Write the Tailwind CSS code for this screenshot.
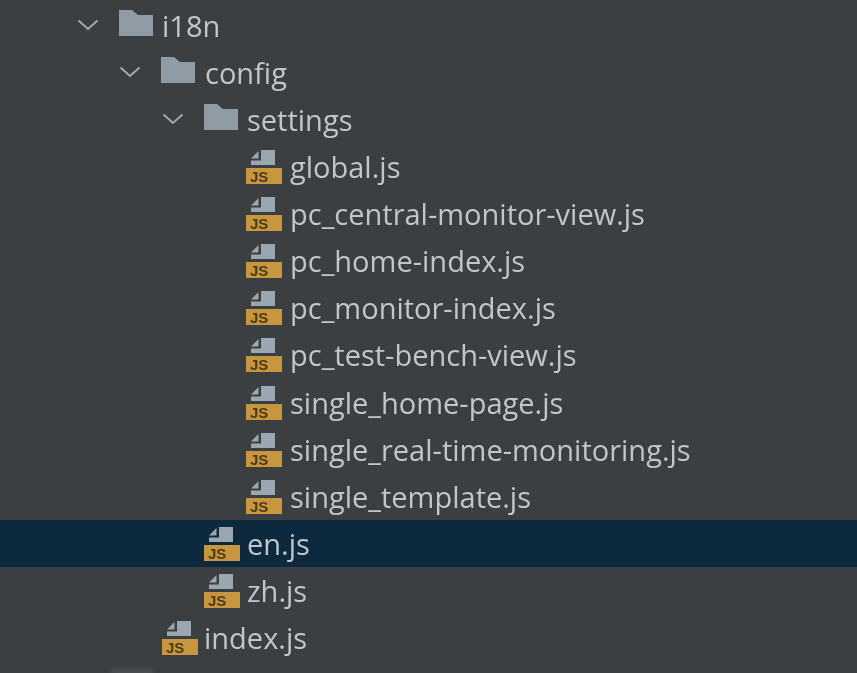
<!DOCTYPE html>
<html><head><meta charset="utf-8"><script src="https://cdn.jsdelivr.net/npm/@tailwindcss/browser@4"></script></head>
<body class="m-0 bg-[#3c3f41]">
<div class="relative w-[857px] h-[673px] overflow-hidden bg-[#3c3f41] pt-[1.5px] font-['Open_Sans','Noto_Sans',sans-serif] text-[29px] text-[#c0c6cc]">
<div class="flex flex-col blur-[0.6px]">
<div class="flex items-center h-[47.14px] pl-[77px]">
  <svg class="w-[22px] h-[12px] mr-[20px]" viewBox="0 0 22 12"><path d="M1.5 1.5 L11 10 L20.5 1.5" fill="none" stroke="#a4a9ad" stroke-width="2"/></svg>
  <svg class="w-[35px] h-[28px] mr-[8px] overflow-visible" viewBox="0 0 35 28"><path d="M0 -1H13L19 4H34V25H0Z" fill="#8f9ca6"/></svg>
  <span class="leading-none">i18n</span>
</div>
<div class="flex items-center h-[47.14px] pl-[119px]">
  <svg class="w-[22px] h-[12px] mr-[20px]" viewBox="0 0 22 12"><path d="M1.5 1.5 L11 10 L20.5 1.5" fill="none" stroke="#a4a9ad" stroke-width="2"/></svg>
  <svg class="w-[35px] h-[28px] mr-[9px] overflow-visible" viewBox="0 0 35 28"><path d="M0 -1H13L19 4H34V25H0Z" fill="#8f9ca6"/></svg>
  <span class="leading-none">config</span>
</div>
<div class="flex items-center h-[47.14px] pl-[162px]">
  <svg class="w-[22px] h-[12px] mr-[20px]" viewBox="0 0 22 12"><path d="M1.5 1.5 L11 10 L20.5 1.5" fill="none" stroke="#a4a9ad" stroke-width="2"/></svg>
  <svg class="w-[35px] h-[28px] mr-[8px] overflow-visible" viewBox="0 0 35 28"><path d="M0 -1H13L19 4H34V25H0Z" fill="#8f9ca6"/></svg>
  <span class="leading-none">settings</span>
</div>
<div class="flex items-center h-[47.14px] pl-[246px]">
  <svg class="w-[37px] h-[37px] mr-[7px]" viewBox="0 0 37 37"><path d="M15 2H29V17H5V12.5H15Z M5 10.5 L12.5 3V10.5Z" fill="#9aa7b0"/><rect x="0" y="20" width="36" height="16" fill="#c8963e"/><text x="4" y="34" font-family="Liberation Sans" font-weight="700" font-size="15" fill="#4a3a18">JS</text></svg>
  <span class="leading-none">global.js</span>
</div>
<div class="flex items-center h-[47.14px] pl-[246px]">
  <svg class="w-[37px] h-[37px] mr-[7px]" viewBox="0 0 37 37"><path d="M15 2H29V17H5V12.5H15Z M5 10.5 L12.5 3V10.5Z" fill="#9aa7b0"/><rect x="0" y="20" width="36" height="16" fill="#c8963e"/><text x="4" y="34" font-family="Liberation Sans" font-weight="700" font-size="15" fill="#4a3a18">JS</text></svg>
  <span class="leading-none">pc_central-monitor-view.js</span>
</div>
<div class="flex items-center h-[47.14px] pl-[246px]">
  <svg class="w-[37px] h-[37px] mr-[7px]" viewBox="0 0 37 37"><path d="M15 2H29V17H5V12.5H15Z M5 10.5 L12.5 3V10.5Z" fill="#9aa7b0"/><rect x="0" y="20" width="36" height="16" fill="#c8963e"/><text x="4" y="34" font-family="Liberation Sans" font-weight="700" font-size="15" fill="#4a3a18">JS</text></svg>
  <span class="leading-none">pc_home-index.js</span>
</div>
<div class="flex items-center h-[47.14px] pl-[246px]">
  <svg class="w-[37px] h-[37px] mr-[7px]" viewBox="0 0 37 37"><path d="M15 2H29V17H5V12.5H15Z M5 10.5 L12.5 3V10.5Z" fill="#9aa7b0"/><rect x="0" y="20" width="36" height="16" fill="#c8963e"/><text x="4" y="34" font-family="Liberation Sans" font-weight="700" font-size="15" fill="#4a3a18">JS</text></svg>
  <span class="leading-none">pc_monitor-index.js</span>
</div>
<div class="flex items-center h-[47.14px] pl-[246px]">
  <svg class="w-[37px] h-[37px] mr-[7px]" viewBox="0 0 37 37"><path d="M15 2H29V17H5V12.5H15Z M5 10.5 L12.5 3V10.5Z" fill="#9aa7b0"/><rect x="0" y="20" width="36" height="16" fill="#c8963e"/><text x="4" y="34" font-family="Liberation Sans" font-weight="700" font-size="15" fill="#4a3a18">JS</text></svg>
  <span class="leading-none">pc_test-bench-view.js</span>
</div>
<div class="flex items-center h-[47.14px] pl-[246px]">
  <svg class="w-[37px] h-[37px] mr-[7px]" viewBox="0 0 37 37"><path d="M15 2H29V17H5V12.5H15Z M5 10.5 L12.5 3V10.5Z" fill="#9aa7b0"/><rect x="0" y="20" width="36" height="16" fill="#c8963e"/><text x="4" y="34" font-family="Liberation Sans" font-weight="700" font-size="15" fill="#4a3a18">JS</text></svg>
  <span class="leading-none">single_home-page.js</span>
</div>
<div class="flex items-center h-[47.14px] pl-[246px]">
  <svg class="w-[37px] h-[37px] mr-[7px]" viewBox="0 0 37 37"><path d="M15 2H29V17H5V12.5H15Z M5 10.5 L12.5 3V10.5Z" fill="#9aa7b0"/><rect x="0" y="20" width="36" height="16" fill="#c8963e"/><text x="4" y="34" font-family="Liberation Sans" font-weight="700" font-size="15" fill="#4a3a18">JS</text></svg>
  <span class="leading-none">single_real-time-monitoring.js</span>
</div>
<div class="flex items-center h-[47.14px] pl-[246px]">
  <svg class="w-[37px] h-[37px] mr-[7px]" viewBox="0 0 37 37"><path d="M15 2H29V17H5V12.5H15Z M5 10.5 L12.5 3V10.5Z" fill="#9aa7b0"/><rect x="0" y="20" width="36" height="16" fill="#c8963e"/><text x="4" y="34" font-family="Liberation Sans" font-weight="700" font-size="15" fill="#4a3a18">JS</text></svg>
  <span class="leading-none">single_template.js</span>
</div>
<div class="flex items-center h-[47.14px] pl-[204px] bg-[#0d293e]">
  <svg class="w-[37px] h-[37px] mr-[6px]" viewBox="0 0 37 37"><path d="M15 2H29V17H5V12.5H15Z M5 10.5 L12.5 3V10.5Z" fill="#9aa7b0"/><rect x="0" y="20" width="36" height="16" fill="#c8963e"/><text x="4" y="34" font-family="Liberation Sans" font-weight="700" font-size="15" fill="#4a3a18">JS</text></svg>
  <span class="leading-none">en.js</span>
</div>
<div class="flex items-center h-[47.14px] pl-[204px]">
  <svg class="w-[37px] h-[37px] mr-[6px]" viewBox="0 0 37 37"><path d="M15 2H29V17H5V12.5H15Z M5 10.5 L12.5 3V10.5Z" fill="#9aa7b0"/><rect x="0" y="20" width="36" height="16" fill="#c8963e"/><text x="4" y="34" font-family="Liberation Sans" font-weight="700" font-size="15" fill="#4a3a18">JS</text></svg>
  <span class="leading-none">zh.js</span>
</div>
<div class="flex items-center h-[47.14px] pl-[162px]">
  <svg class="w-[37px] h-[37px] mr-[5px]" viewBox="0 0 37 37"><path d="M15 2H29V17H5V12.5H15Z M5 10.5 L12.5 3V10.5Z" fill="#9aa7b0"/><rect x="0" y="20" width="36" height="16" fill="#c8963e"/><text x="4" y="34" font-family="Liberation Sans" font-weight="700" font-size="15" fill="#4a3a18">JS</text></svg>
  <span class="leading-none">index.js</span>
</div>
</div>
<div class="absolute left-[110px] top-[670px] w-[44px] h-[10px] rounded-full bg-[#505355] blur-[3px]"></div>
</div>
</body></html>
